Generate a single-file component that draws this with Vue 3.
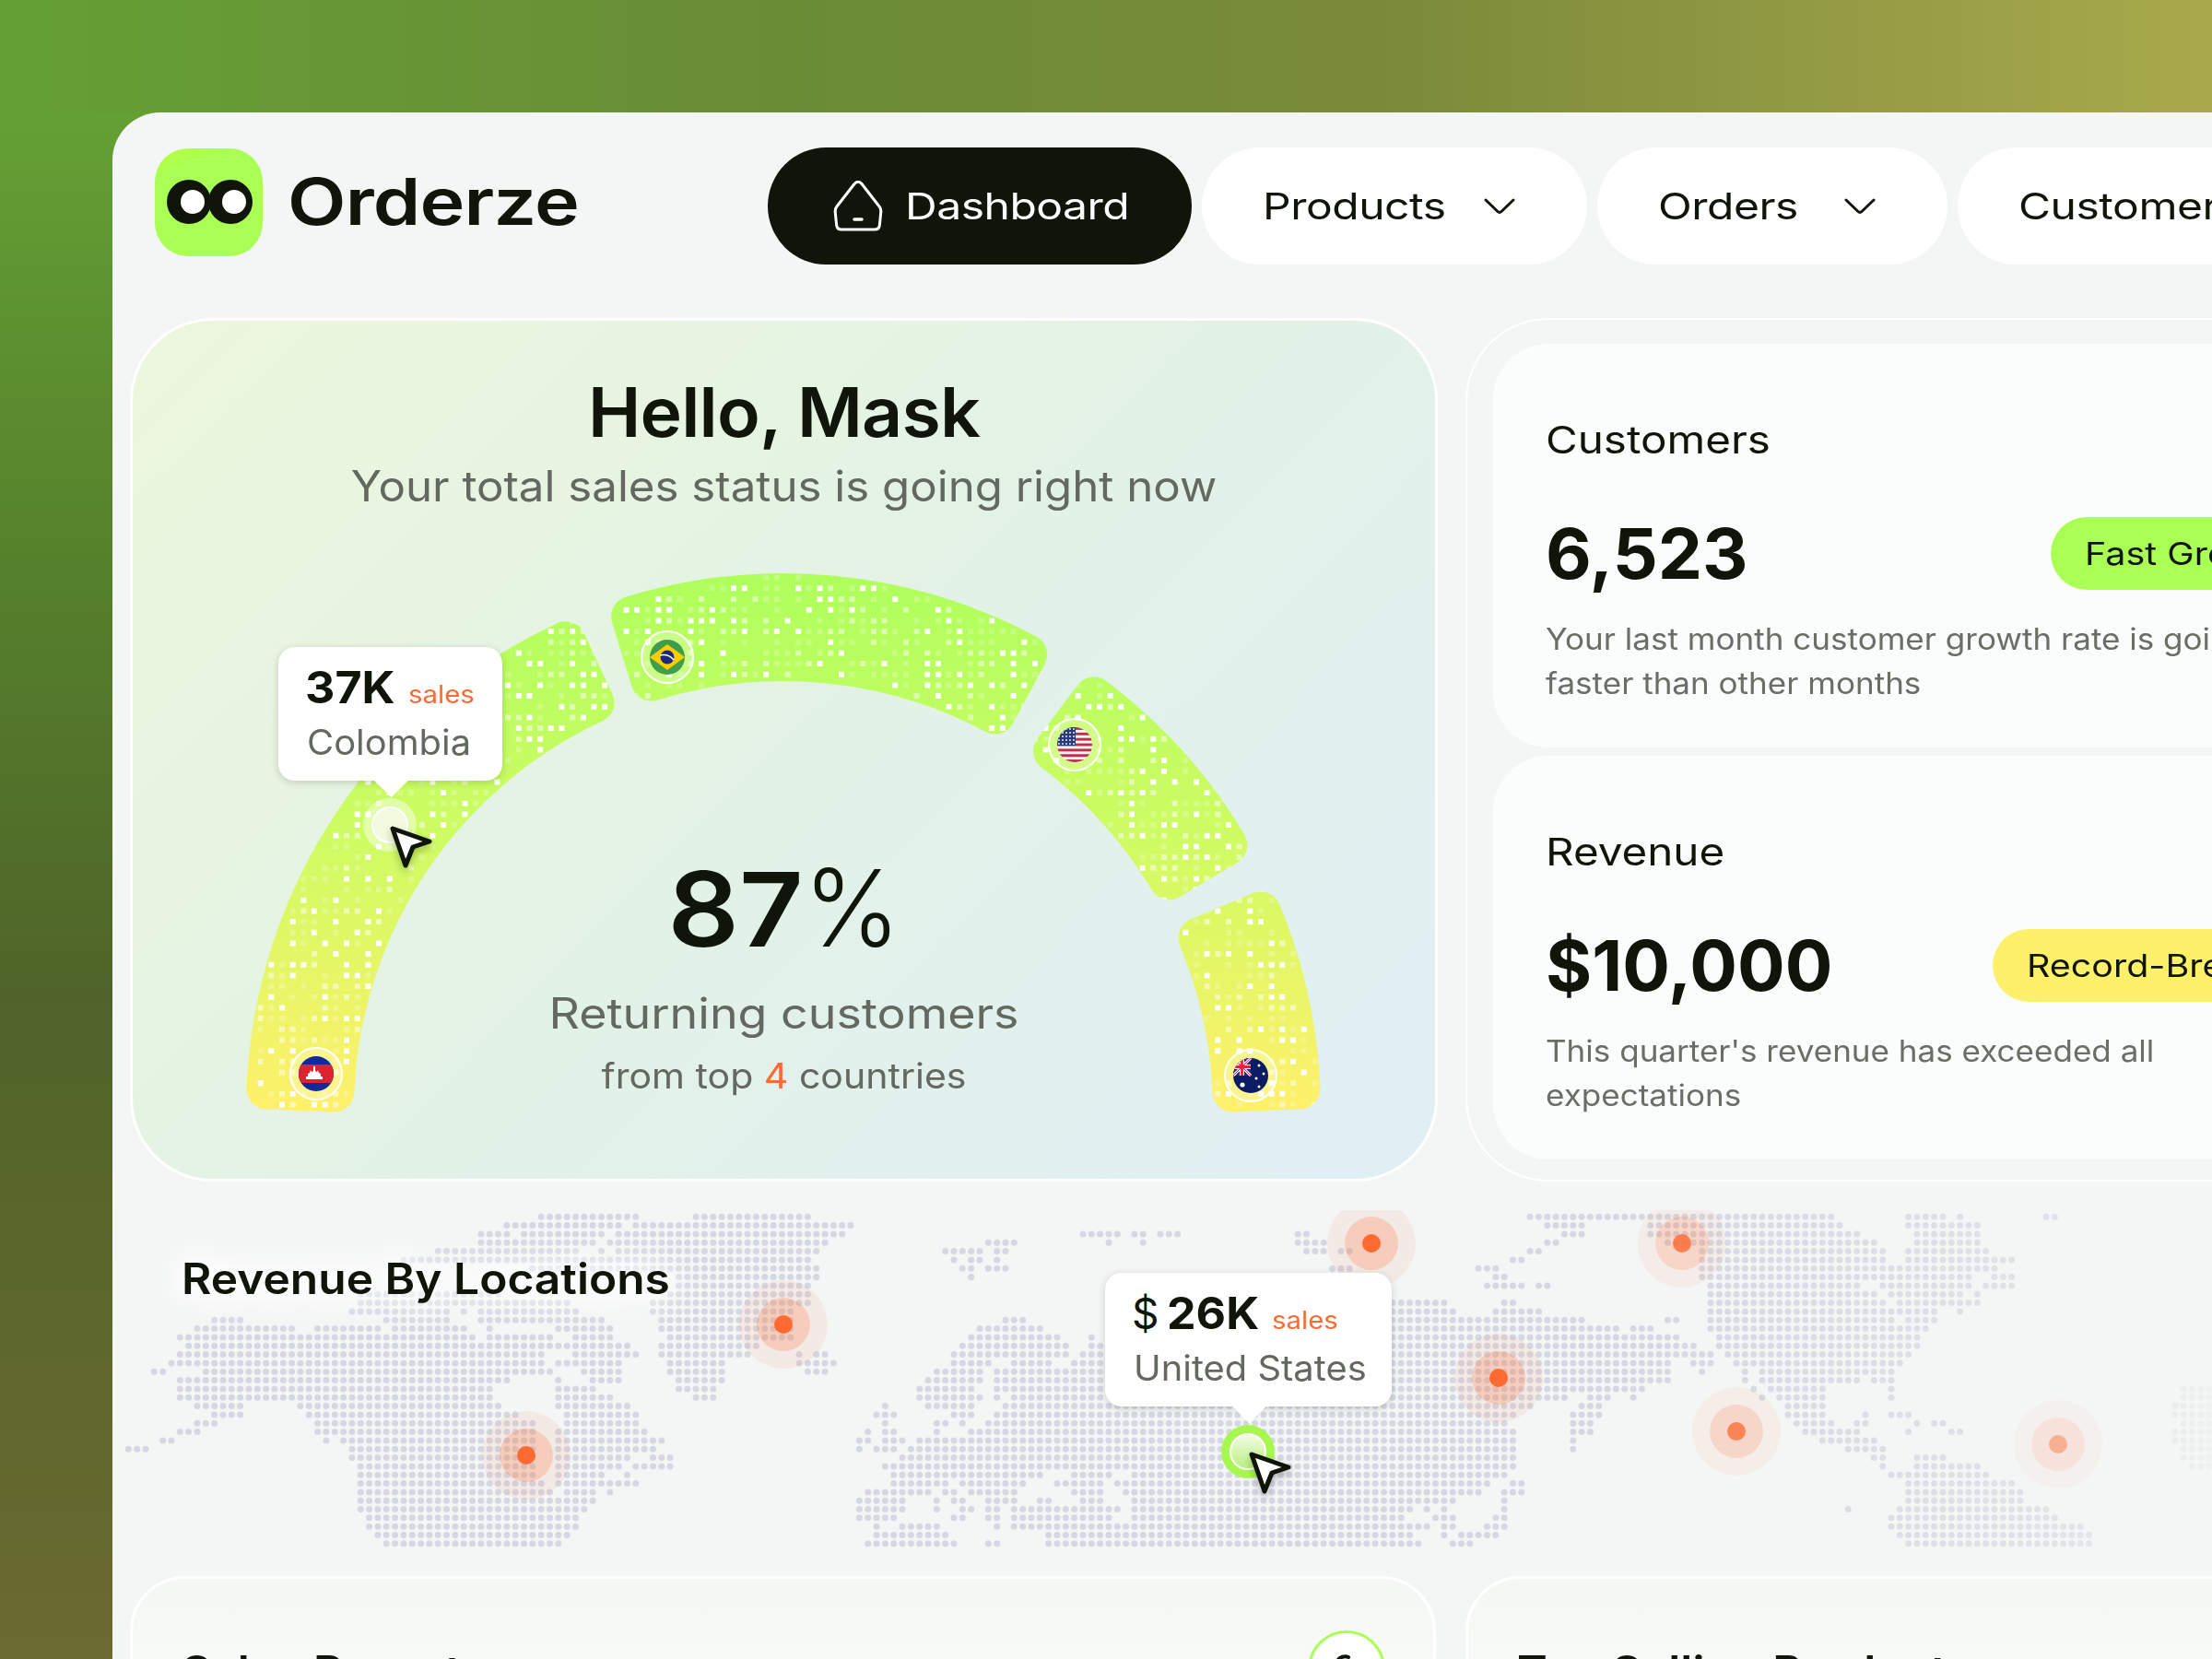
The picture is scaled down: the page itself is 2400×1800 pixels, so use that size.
<template>
  <div class="page">
    <div class="window">
      <header class="topbar">
        <div class="logo-mark">
          <svg viewBox="0 0 117 117" width="117" height="117">
            <circle cx="37" cy="58" r="24" fill="#10150a" />
            <circle cx="82" cy="58" r="24" fill="#10150a" />
            <circle cx="41" cy="58" r="13" fill="#fff" />
            <circle cx="86" cy="58" r="13" fill="#fff" />
          </svg>
        </div>
        <span class="logo-text">Orderze</span>
        <nav class="nav">
          <a class="nav-pill nav-dash">
            <svg class="home-icon" viewBox="0 0 54 56" width="54" height="56" fill="none">
              <path d="M23 3.500 4 28c-1.600 2-2 3.500-1.800 6l1.500 14.500C4 51.500 6 53 9 53h36c3 0 5-1.500 5.300-4.500L51.800 34c.2-2.500-.2-4-1.800-6L31 3.500c-2.500-3-5.500-3-8 0Z" stroke="#fff" stroke-width="3" />
              <path d="M23 42h8" stroke="#fff" stroke-width="3.500" stroke-linecap="round" />
            </svg>
            <span class="nav-label">Dashboard</span>
          </a>
          <a v-for="item in navItems" :key="item.label" class="nav-pill" :class="item.cls">
            <span class="nav-label">{{ item.label }}</span>
            <svg class="chevron" viewBox="0 0 36 20" width="36" height="20" fill="none">
              <path d="M3 3 16 15.500c1.200 1.100 2.800 1.100 4 0L33 3" stroke="#10150a" stroke-width="3" stroke-linecap="round" />
            </svg>
          </a>
        </nav>
      </header>

      <section class="top-row">
        <div class="hero">
          <svg class="gauge" viewBox="141 346 1417 934" width="1417" height="934">
            <defs>
              <linearGradient id="gaugeFill" gradientUnits="userSpaceOnUse" x1="0" y1="620" x2="0" y2="1205">
                <stop offset="0" stop-color="#aeff5c" />
                <stop offset="0.5" stop-color="#cffb63" />
                <stop offset="1" stop-color="#fff06b" />
              </linearGradient>
              <mask id="gaugeMask" maskUnits="userSpaceOnUse" x="141" y="346" width="1417" height="934">
                <path v-for="(d, i) in segments" :key="i" :d="d" fill="#fff" stroke="#fff" stroke-width="44" stroke-linejoin="round" />
              </mask>
              <clipPath id="flagClip"><circle r="19" /></clipPath>
            </defs>
            <g mask="url(#gaugeMask)">
              <rect x="141" y="600" width="1417" height="620" fill="url(#gaugeFill)" />
              <path v-for="lvl in gaugeDots" :key="lvl.opacity" :d="lvl.d" fill="#fff" :opacity="lvl.opacity" />
            </g>

            <!-- flags -->
            <g transform="translate(343 1165)">
              <circle r="28" fill="#fff" fill-opacity="0.25" stroke="#fff" stroke-width="2" />
              <g clip-path="url(#flagClip)">
                <rect x="-19" y="-19" width="38" height="38" fill="#10299c" />
                <rect x="-19" y="-10" width="38" height="20" fill="#dc2330" />
                <path d="M-11 6v-3h2v-3l2-1 1-3 1 2 2-1V-7l1-2 1 2v4l2 1 1-2 1 3 2 1v3h2v3Z" fill="#fff" />
              </g>
            </g>
            <g transform="translate(724 713)">
              <circle r="28" fill="#fff" fill-opacity="0.25" stroke="#fff" stroke-width="2" />
              <g clip-path="url(#flagClip)">
                <rect x="-19" y="-19" width="38" height="38" fill="#3f9e4a" />
                <path d="M0-14 19 0 0 14-19 0Z" fill="#fc0" />
                <circle r="7.500" fill="#1a2a7c" />
                <path d="M-8-2c5-1 11 0 15 5" stroke="#fff" stroke-width="1.500" fill="none" />
              </g>
            </g>
            <g transform="translate(1166 808)">
              <circle r="28" fill="#fff" fill-opacity="0.25" stroke="#fff" stroke-width="2" />
              <g clip-path="url(#flagClip)">
                <rect x="-19" y="-19" width="38" height="38" fill="#f4f4f6" />
                <rect v-for="n in 7" :key="n" x="-19" :y="-19 + (n - 1) * 5.850" width="38" height="2.900" fill="#c0304a" />
                <rect x="-19" y="-19" width="20" height="20" fill="#2a3a78" />
                <circle v-for="s in usStars" :key="s.k" :cx="s.x" :cy="s.y" r="0.900" fill="#fff" />
              </g>
            </g>
            <g transform="translate(1357 1167)">
              <circle r="28" fill="#fff" fill-opacity="0.25" stroke="#fff" stroke-width="2" />
              <g clip-path="url(#flagClip)">
                <rect x="-19" y="-19" width="38" height="38" fill="#0b1c64" />
                <rect x="-19" y="-19" width="19" height="19" fill="#1d2f80" />
                <path d="M-19-19 0 0M0-19-19 0" stroke="#fff" stroke-width="3" />
                <path d="M-9.500-19V0M-19-9.500H0" stroke="#fff" stroke-width="5" />
                <path d="M-9.500-19V0M-19-9.500H0" stroke="#d8283c" stroke-width="2.800" />
                <path d="M-19-19 0 0M0-19-19 0" stroke="#d8283c" stroke-width="1" />
                <circle cx="-9" cy="10" r="2.600" fill="#fff" />
                <circle cx="9" cy="-11" r="1.500" fill="#fff" />
                <circle cx="14" cy="-2" r="1.500" fill="#fff" />
                <circle cx="6" cy="3" r="1.500" fill="#fff" />
                <circle cx="9" cy="12" r="1.500" fill="#fff" />
              </g>
            </g>

            <!-- hovered point -->
            <circle cx="423" cy="895" r="29" fill="#fff" fill-opacity="0.45" />
            <circle cx="423" cy="895" r="19" fill="#f2fbdf" stroke="#fff" stroke-width="2" />
            <path :d="cursorPath" transform="translate(425 898)" fill="#fff" stroke="#10150a" stroke-width="5" stroke-linejoin="round" class="cursor" />
          </svg>

          <div class="hero-head">
            <h1 class="hello">Hello, Mask</h1>
            <p class="tagline">Your total sales status is going right now</p>
          </div>
          <div class="hero-stat">
            <div class="percent"><span class="pct-num">87</span><span class="pct-sign">%</span></div>
            <div class="returning">Returning customers</div>
            <div class="from-top">from top <em>4</em> countries</div>
          </div>

          <div class="tip tip-colombia">
            <div class="tip-top"><b class="tip-val">37K</b><span class="tip-sales">sales</span></div>
            <div class="tip-name">Colombia</div>
          </div>
        </div>

        <div class="stats">
          <article v-for="card in statCards" :key="card.label" class="stat-card">
            <h3 class="stat-label">{{ card.label }}</h3>
            <div class="stat-row">
              <span class="stat-value">{{ card.value }}</span>
              <span class="stat-pill" :class="card.pillCls"><span class="pill-text">{{ card.pill }}</span></span>
            </div>
            <p class="stat-desc">{{ card.lines[0] }}<br />{{ card.lines[1] }}</p>
          </article>
        </div>
      </section>

      <section class="map-section">
        <svg class="map" viewBox="122 1313 2278 369" width="2278" height="369">
          <defs>
            <linearGradient id="mapFade" gradientUnits="userSpaceOnUse" x1="122" y1="0" x2="2400" y2="0">
              <stop offset="0" stop-color="#d4d8e2" />
              <stop offset="0.72" stop-color="#d4d8e2" />
              <stop offset="0.93" stop-color="#e0e3e8" />
              <stop offset="1" stop-color="#eef0f1" />
            </linearGradient>
            <linearGradient id="pinFill" x1="0" y1="0" x2="0" y2="1">
              <stop offset="0" stop-color="#f4fbe8" />
              <stop offset="1" stop-color="#b9f07d" />
            </linearGradient>
          </defs>
          <path :d="mapDots" fill="none" stroke="url(#mapFade)" stroke-width="7" stroke-linecap="round" />
          <g v-for="pin in pins" :key="pin.x" :opacity="pin.o">
            <circle :cx="pin.x" :cy="pin.y" r="48" fill="#ff6a32" fill-opacity="0.08" />
            <circle :cx="pin.x" :cy="pin.y" r="29" fill="#ff6a32" fill-opacity="0.22" />
            <circle :cx="pin.x" :cy="pin.y" r="10" fill="#ff6a32" />
          </g>
          <circle cx="1354" cy="1575" r="29" fill="#a8f751" />
          <circle cx="1354" cy="1575" r="19" fill="url(#pinFill)" stroke="#fff" stroke-width="2" />
          <path :d="cursorPath" transform="translate(1357 1577)" fill="#fff" stroke="#10150a" stroke-width="5" stroke-linejoin="round" class="cursor" />
        </svg>
        <h2 class="map-title">Revenue By Locations</h2>
        <div class="tip tip-us">
          <div class="tip-top"><span class="tip-dollar">$</span><b class="tip-val">26K</b><span class="tip-sales">sales</span></div>
          <div class="tip-name">United States</div>
        </div>
      </section>

      <section class="bottom-row">
        <div class="bottom-card">
          <h2 class="bottom-title">Sales Report</h2>
          <span class="round-btn">
            <svg viewBox="0 0 40 40" width="40" height="40" fill="none">
              <path d="M10 16c2-4 8-6 12-4" stroke="#10150a" stroke-width="4" stroke-linecap="round" />
            </svg>
          </span>
        </div>
        <div class="bottom-card bottom-wide">
          <h2 class="bottom-title">Top Selling Products</h2>
        </div>
      </section>
    </div>
  </div>
</template>

<script setup>
const navItems = [
  { label: 'Products', cls: 'nav-products' },
  { label: 'Orders', cls: 'nav-orders' },
  { label: 'Customers', cls: 'nav-customers' }
]

const statCards = [
  {
    label: 'Customers',
    value: '6,523',
    pill: 'Fast Growth',
    pillCls: 'pill-green',
    lines: ['Your last month customer growth rate is going', 'faster than other months']
  },
  {
    label: 'Revenue',
    value: '$10,000',
    pill: 'Record-Breaking',
    pillCls: 'pill-yellow',
    lines: ["This quarter's revenue has exceeded all", 'expectations']
  }
]

const pins = [
  { x: 571, y: 1579, o: 1 },
  { x: 850, y: 1437, o: 1 },
  { x: 1488, y: 1349, o: 1 },
  { x: 1626, y: 1495, o: 1 },
  { x: 1825, y: 1349, o: 0.85 },
  { x: 1884, y: 1553, o: 0.8 },
  { x: 2233, y: 1567, o: 0.5 }
]

const cursorPath = 'M1 1 41 15 23 21 15 41Z'

// gauge: angles are degrees clockwise from the left end of the arc
const CX = 850
const CY = 1205
const R_OUT = 583
const R_IN = 466
const INSET = 22

function polar(r, deg) {
  const a = (deg * Math.PI) / 180
  return [(CX - r * Math.cos(a)).toFixed(1), (CY - r * Math.sin(a)).toFixed(1)]
}

function segment(from, to) {
  const ro = R_OUT - INSET
  const ri = R_IN + INSET
  const pad = (INSET / ((ro + ri) / 2)) * (180 / Math.PI)
  const a0 = from + pad
  const a1 = to - pad
  const p1 = polar(ro, a0)
  const p2 = polar(ro, a1)
  const p3 = polar(ri, a1)
  const p4 = polar(ri, a0)
  return `M${p1} A${ro} ${ro} 0 0 1 ${p2} L${p3} A${ri} ${ri} 0 0 0 ${p4}Z`
}

const segments = [
  segment(0, 67.5),
  segment(70.5, 120.5),
  segment(124.5, 151.5),
  segment(155, 180)
]

function noise(x, y) {
  let h = (x * 374761393 + y * 668265263) | 0
  h = Math.imul(h ^ (h >>> 13), 1274126177)
  return ((h ^ (h >>> 16)) >>> 0) / 4294967296
}

const gaugeDots = (() => {
  const levels = [
    { opacity: 0.22, d: '' },
    { opacity: 0.5, d: '' },
    { opacity: 0.95, d: '' }
  ]
  for (let row = 0; row < 52; row++) {
    for (let col = 0; col < 101; col++) {
      const x = 268 + col * 11.67
      const y = 612 + row * 11.67
      const dist = Math.hypot(x + 3 - CX, y + 3 - CY)
      if (dist > R_OUT - 4 || dist < R_IN + 4) continue
      const n = noise(col, row)
      if (n < 0.35) continue
      const lvl = n < 0.62 ? 0 : n < 0.78 ? 1 : 2
      levels[lvl].d += `M${x.toFixed(1)} ${y.toFixed(1)}h6v6h-6z`
    }
  }
  return levels
})()

const usStars = (() => {
  const out = []
  for (let r = 0; r < 5; r++) {
    for (let c = 0; c < 5; c++) {
      out.push({ k: `${r}-${c}`, x: -17 + c * 4, y: -17 + r * 4 })
    }
  }
  return out
})()

// dotted world map, spans read off in crop pixels (west crop and east crop)
const west = [
  '722-875 987-1168',
  '663-845 883-1155 1177-1242',
  '619-655 692-815 853-1227',
  '619-685 707-800 839-1198 1472-1520',
  '546-612 633-685 707-772 825 853-1183 1398-1462 1487-1505',
  '490-523 546-626 648-670 692-1168 1413 1443-1462 1487',
  '700-1183 1428-1447 1472-1505',
  '950-1183 1443',
  '950-1170',
  '415-650 940-1170',
  '415-570 590-615 620-655 678-758 912-1170',
  '400-550 590 620-640 663-772 912-1140',
  '165-198 460-550 620-640 663-815 927-1140 1502-1535',
  '135-288 340-434 473-580 622 752-830 927-1140 1458-1568',
  '105-580 606 635-670 692-728 782-830 942-1140 1443-1568',
  '120-728 752-772 795-860 927-1080 1428-1568',
  '105-714 782-875 927-1066 1150 1178-1197 1413-1568',
  '90-714 752-830 855 942-1022 1150-1212 1413-1478 1515-1568',
  '62-80 150-670 692-728 797-845 942-1022 1164-1197 1384-1462 1487-1568',
  '105-655 752 810-845 957-1022 1370-1462 1487-1568',
  '105-626 752-800 957-1007 1355-1447 1487-1568',
  '105-626 752-815 840 987-1007 1355-1462 1487 1530-1568',
  '135-198 310-640 752-860 1297 1370-1447 1502-1568',
  '165-198 325-670 767-875 1282-1312 1413-1447 1487-1568',
  '135-155 340-700 767-875 1297 1384-1403 1428 1472-1568',
  '105-125 340-700 752-890 1268 1297-1312 1384 1443-1568',
  '75-95 355 385-700 752-917 1253-1272 1297-1330 1355-1568',
  '18-50 400-700 752-905 1253 1282-1315 1340-1568',
  '400-700 752-860 900-935 1325-1568',
  '415-700 752-845 885-935 1297-1568',
  '415-700 752-815 870 1310-1538 1560',
  '415-700 710 752-875 1310-1405 1428-1535',
  '415-725 767-800 840 1268-1375 1400-1418 1443-1520',
  '415-725 752-800 1253-1330 1385 1413-1432 1472-1520 1560',
  '415-785 1253-1330 1385 1428-1447 1472-1490 1530-1568',
  '430-772 1253-1315 1413-1432 1472-1490 1515-1568',
  '430-772 1282 1325-1390 1487 1530-1568',
  '445-757 1282-1405',
  '460-743 1268-1418 1472-1490'
]

const east = [
  '672-1072 1170-1220 1238 1350-1365',
  '695-745 830-1085 1170-1255',
  '96-137 155-170 187-215 368-385 718-745 830-1105 1180-1265',
  '122 167 370-408 695-710 850-1130 1180-1265',
  '380-408 425-440 672-688 895-1140 1170-1275',
  '650-665 895-1140 1170-1300',
  '415-440 605-630 895-1285',
  '630-645 905-1250 1285-1310',
  '618-668 685-700 908-1105 1135-1245 1272-1310',
  '908-1120 1145-1240 1260',
  '500-565 640-655 908-1125 1135 1160-1265',
  '500-578 628-690 908-1125 1135-1165 1180-1205 1238',
  '5 500-745 855-870 908-1150 1170-1205',
  '5-35 200-785 810-835 908-1195',
  '5-55 97 200-870 920-1185',
  '5-70 97-112 200-890 920-1185',
  '5-70 85-115 200-915 930-1175',
  '5-45 75-115 200-860 888-915 942-1160',
  '5-115 200-860 902 955 975-1150',
  '5-115 200-860 955 975-1105 1120 1135-1150',
  '5-115 200-825 968 990-1060 1148 1530-1568',
  '5-115 200-725 752-780 810 978 1000-1060 1148 1530-1568',
  '5-670 742-770 1010-1060 1515-1568',
  '5-640 652 730-770 1010-1060 1115 1145-1175 1515-1568',
  '5-640 730-755 1022-1070 1100-1115 1180 1205-1220 1530-1568',
  '5-640 652 730-755 1032-1105 1170 1225-1240 1515-1568',
  '5-640 652 730 1055-1130 1515-1568',
  '5-640 652 730 1090-1140 1530-1568',
  '5-640 652 1120-1140 1180-1220 1530-1568',
  '5-640 652 1135 1180-1265 1545-1568',
  '5-35 75-125 155-640 1148-1275',
  '52-115 130-620 650-665 1170-1310',
  '75-115 142-610 640-665 1170-1320',
  '30-45 85-115 155-578 640 1170-1320',
  '5-137 155-520 540 562 640 1090 1160-1345',
  '5-125 155-510 550-578 630-640 1148-1365',
  '5-545 562-578 618-640 1148-1400',
  '50-520 562 582-632 1160-1410',
  '40-530 572-600 1170-1410'
]

const PITCH = 9.33

function addRows(rows, toX, seen) {
  rows.forEach((row, k) => {
    row.split(' ').forEach(span => {
      const [a, b = a] = span.split('-').map(Number)
      const c0 = Math.round((toX(a) - 130) / PITCH)
      const c1 = Math.round((toX(b) - 130) / PITCH)
      for (let c = c0; c <= c1; c++) seen.add(`${c},${k}`)
    })
  })
}

const mapDots = (() => {
  const seen = new Set()
  addRows(west, x => 130 + x / 1.568, seen)
  addRows(east, x => 1100 + x / 1.206, seen)
  let d = ''
  seen.forEach(key => {
    const [c, k] = key.split(',').map(Number)
    d += `M${(130 + c * PITCH).toFixed(1)} ${(1320.3 + k * PITCH).toFixed(1)}h0`
  })
  return d
})()
</script>

<style scoped>
.page {
  width: 2400px;
  height: 1800px;
  overflow: hidden;
  padding: 122px 0 0 122px;
  box-sizing: border-box;
  background:
    linear-gradient(90deg, #64a034 0%, #6a8c37 35%, #7a8a3a 62%, #a9a94c 100%) 0 0 / 100% 122px no-repeat,
    linear-gradient(180deg, #64a034 0%, #64a034 7%, #55802c 35%, #506429 60%, #6b6a32 100%);
  font-family: Inter, "Liberation Sans", sans-serif;
  color: #10150a;
}
.window {
  width: 2640px;
  height: 1800px;
  background: #f4f6f5;
  border-radius: 52px 0 0 0;
  overflow: hidden;
}

/* header */
.topbar {
  display: flex;
  align-items: flex-start;
  height: 223px;
  padding: 38px 0 0 46px;
  box-sizing: border-box;
}
.logo-mark {
  width: 117px;
  height: 117px;
  margin-top: 1px;
  border-radius: 36px;
  background: linear-gradient(160deg, #b9ff3d 0%, #aaff55 20%);
  flex: none;
}
.logo-text {
  margin: 24px 0 0 27px;
  width: 321px;
  font-size: 70px;
  font-weight: 600;
  line-height: 1;
  letter-spacing: -0.01em;
  transform: scaleX(1.18);
  transform-origin: left;
  flex: none;
}
.nav {
  display: flex;
  gap: 11px;
  margin-left: 200px;
  flex: none;
}
.nav-pill {
  display: flex;
  align-items: center;
  height: 127px;
  border-radius: 64px;
  background: #fff;
  box-sizing: border-box;
  padding-left: 66px;
  flex: none;
}
.nav-label {
  font-size: 40px;
  flex: 1;
  letter-spacing: -0.01em;
  transform: scaleX(1.2);
  transform-origin: left;
  white-space: nowrap;
}
.nav-dash {
  width: 460px;
  background: #10150a;
  color: #fff;
  padding-left: 71px;
}
.home-icon {
  margin-right: 24px;
}
.nav-products { width: 418px; }
.nav-orders { width: 380px; }
.nav-customers { width: 460px; }
.chevron {
  margin-right: 77px;
}

/* top row */
.top-row {
  display: flex;
  gap: 30px;
  padding-left: 19px;
}
.hero {
  position: relative;
  width: 1419px;
  height: 937px;
  flex: none;
  box-sizing: border-box;
  border: 3px solid #fff;
  border-radius: 90px;
  background: linear-gradient(135deg, #ecf7dc 0%, #e3f2e6 50%, #e0eff5 100%);
  text-align: center;
}
.gauge {
  position: absolute;
  left: -3px;
  top: -2px;
}
.cursor {
  filter: drop-shadow(0 4px 4px rgba(0, 0, 0, 0.25));
}
.hero-head,
.hero-stat {
  position: relative;
}
.hero-head {
  padding-top: 57px;
}
.hello {
  margin: 0;
  font-size: 74px;
  line-height: 84px;
  font-weight: 600;
  letter-spacing: -0.01em;
  transform: scaleX(1.04);
}
.tagline {
  margin: 10px 0 0;
  font-size: 46px;
  line-height: 56px;
  color: #636860;
  transform: scaleX(1.07);
}
.hero-stat {
  margin-top: 365px;
}
.percent {
  line-height: 130px;
  display: flex;
  justify-content: center;
  align-items: baseline;
  padding-left: 8px;
}
.pct-num {
  font-size: 112px;
  font-weight: 600;
  transform: scaleX(1.08);
}
.pct-sign {
  font-size: 116px;
  font-weight: 300;
  margin-left: 4px;
  transform: scaleX(0.97);
}
.returning {
  margin-top: 20px;
  font-size: 46px;
  line-height: 56px;
  color: #636860;
  transform: scaleX(1.13);
}
.from-top {
  margin-top: 16px;
  font-size: 38px;
  line-height: 48px;
  color: #636860;
  transform: scaleX(1.08);
}
.from-top em {
  font-style: normal;
  color: #ff6a32;
}

/* tooltips */
.tip {
  position: absolute;
  box-sizing: border-box;
  height: 145px;
  background: #fff;
  border-radius: 18px;
  box-shadow: 0 2px 8px rgba(20, 30, 10, 0.18);
  text-align: left;
}
.tip::after {
  content: '';
  position: absolute;
  left: 50%;
  bottom: -13px;
  width: 27px;
  height: 27px;
  margin-left: -13px;
  background: #fff;
  transform: rotate(45deg);
  clip-path: polygon(100% 0, 100% 100%, 0 100%);
}
.tip-colombia {
  left: 158px;
  top: 354px;
  width: 243px;
  padding: 16px 0 0 29px;
}
.tip-us {
  left: 1077px;
  top: 68px;
  width: 311px;
  padding: 16px 0 0 29px;
}
.tip-top {
  display: flex;
  align-items: baseline;
  height: 56px;
}
.tip-val {
  font-size: 48px;
  font-weight: 700;
  line-height: 56px;
  transform: scaleX(1.045);
  transform-origin: left;
}
.tip-dollar {
  font-size: 46px;
  line-height: 56px;
  margin-right: 8px;
}
.tip-sales {
  font-size: 27px;
  color: #ff6a32;
  margin-left: 19px;
  transform: scaleX(1.09);
  transform-origin: left;
}
.tip-name {
  margin: 8px 0 0 2px;
  font-size: 38px;
  line-height: 46px;
  color: #636860;
  transform: scaleX(1.05);
  transform-origin: left;
  white-space: nowrap;
}

/* stat cards */
.stats {
  flex: none;
  width: 1060px;
  height: 937px;
  box-sizing: border-box;
  border: 2px solid #fff;
  border-radius: 90px;
  padding: 26px 28px 0;
  display: flex;
  flex-direction: column;
  gap: 9px;
}
.stat-card {
  flex: none;
  height: 438px;
  box-sizing: border-box;
  padding: 77px 58px 0 57px;
  background: #fbfcfc;
  border-radius: 60px;
}
.stat-label {
  margin: 0;
  font-size: 41px;
  line-height: 54px;
  font-weight: 400;
  transform: scaleX(1.16);
  transform-origin: left;
}
.stat-row {
  display: flex;
  justify-content: space-between;
  align-items: center;
  height: 80px;
  margin-top: 56px;
}
.stat-value {
  font-size: 76px;
  font-weight: 700;
  transform: scaleX(1.01);
  transform-origin: left;
}
.stat-pill {
  height: 79px;
  border-radius: 40px;
  display: flex;
  align-items: center;
  padding-left: 37px;
  box-sizing: border-box;
}
.pill-green { background: #aaff55; width: 337px; }
.pill-yellow { background: #fff06b; width: 400px; }
.pill-text {
  font-size: 34px;
  transform: scaleX(1.16);
  transform-origin: left;
  white-space: nowrap;
}
.stat-desc {
  margin: 30px 0 0;
  font-size: 32px;
  line-height: 48px;
  color: #6a6e66;
  transform: scaleX(1.095);
  transform-origin: left;
  white-space: nowrap;
}

/* map */
.map-section {
  position: relative;
  height: 369px;
  margin-top: 31px;
  overflow: hidden;
}
.map {
  position: absolute;
  left: 0;
  top: 0;
}
.map-title {
  position: relative;
  margin: 0;
  padding: 46px 0 0 75px;
  font-size: 46px;
  line-height: 56px;
  font-weight: 600;
  transform-origin: 75px 0;
  transform: scaleX(1.08);
  text-shadow: 0 0 24px #fff, 0 0 24px #fff, 0 0 40px #fff, 0 0 60px #fff;
}

/* bottom */
.bottom-row {
  display: flex;
  gap: 32px;
  padding-left: 19px;
  margin-top: 28px;
}
.bottom-card {
  position: relative;
  width: 1417px;
  height: 300px;
  flex: none;
  box-sizing: border-box;
  border: 3px solid #fff;
  border-radius: 60px;
  background: linear-gradient(180deg, #f4f7f4 0%, #fafbfa 45%);
  padding: 72px 0 0 53px;
}
.bottom-wide {
  width: 1060px;
}
.bottom-title {
  margin: 0;
  font-size: 46px;
  line-height: 56px;
  font-weight: 600;
  transform: scaleX(1.08);
  transform-origin: left;
}
.round-btn {
  position: absolute;
  left: 1275px;
  top: 56px;
  width: 84px;
  height: 84px;
  box-sizing: border-box;
  border: 3px solid #aaff55;
  border-radius: 50%;
  background: #fff;
  display: flex;
  justify-content: center;
  padding-top: 14px;
}
</style>

<style>
html, body { margin: 0; background: #f4f6f5; }
</style>
